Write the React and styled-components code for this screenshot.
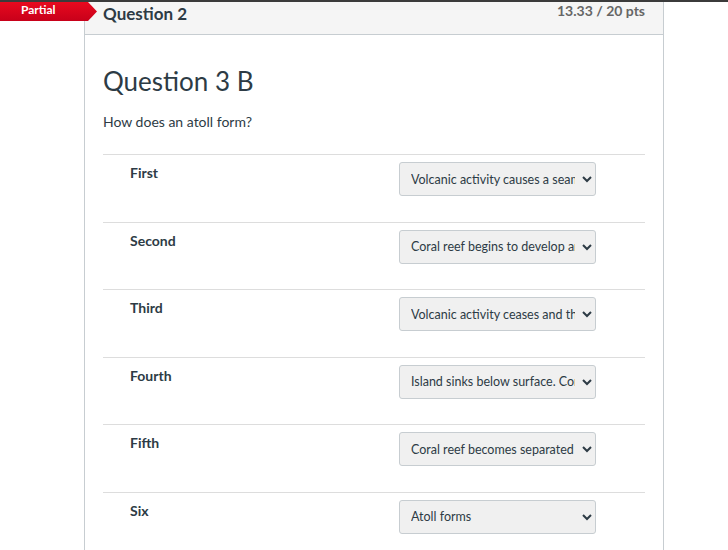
import React from "react";
import styled, { createGlobalStyle } from "styled-components";

const Global = createGlobalStyle`
  html, body { margin: 0; padding: 0; background: #fff; }
  body { font-family: Lato, "Open Sans", sans-serif; color: #2d3b45; }
  * { box-sizing: border-box; }
`;

const Page = styled.div`
  position: relative;
  width: 728px;
  height: 550px;
  overflow: hidden;
  border-top: 2px solid #3b3b3b;
  padding-left: 84px;
`;

const Badge = styled.div`
  position: absolute;
  left: 0;
  top: 0;
  width: 97px;
  height: 19px;
  background: linear-gradient(#e80a1e, #c8001a);
  clip-path: polygon(0 0, 88px 0, 97px 9.5px, 88px 19px, 0 19px);
  color: #fff;
  font-size: 12px;
  font-weight: 700;
  line-height: 15px;
  padding-left: 21px;
`;

const Card = styled.div`
  width: 580px;
  height: 560px;
  border-left: 1px solid #c7cdd1;
  border-right: 1px solid #c7cdd1;
`;

const Header = styled.div`
  display: flex;
  justify-content: space-between;
  align-items: flex-start;
  height: 33px;
  background: #f5f5f5;
  border-bottom: 1px solid #c7cdd1;
  padding: 0 18px 0 18px;
`;

const HeaderTitle = styled.div`
  font-size: 17px;
  font-weight: 700;
  color: #2d3b45;
  line-height: 22px;
  margin-top: 1px;
`;

const Points = styled.div`
  font-size: 14px;
  font-weight: 700;
  color: #666;
  line-height: 14px;
  margin-top: 2px;
`;

const Body = styled.div`
  padding: 30px 18px 0 18px;
`;

const Title = styled.h2`
  margin: 0;
  font-size: 26px;
  font-weight: 400;
  line-height: 32px;
  color: #2d3b45;
`;

const Prompt = styled.p`
  margin: 15px 0 22px;
  font-size: 14px;
  line-height: 20px;
  color: #2d3b45;
`;

const Row = styled.div`
  display: flex;
  justify-content: space-between;
  align-items: flex-start;
  height: 67.6px;
  border-top: 1px solid #dddddd;
  padding: 7px 49px 0 27px;
`;

const Label = styled.div`
  font-size: 14px;
  font-weight: 700;
  line-height: 18px;
  margin-top: 2px;
  color: #2d3b45;
`;

const Select = styled.select`
  width: 197px;
  height: 34px;
  font-family: Lato, "Open Sans", sans-serif;
  font-size: 12.5px;
  color: #2d3b45;
  background: #f0f0f0;
  border: 1px solid #c7cdd1;
  border-radius: 3px;
  padding: 0 4px 0 7px;
`;

const rows = [
  ["First", "Volcanic activity causes a seamount to form"],
  ["Second", "Coral reef begins to develop around the island"],
  ["Third", "Volcanic activity ceases and the island erodes"],
  ["Fourth", "Island sinks below surface. Coral continues to grow"],
  ["Fifth", "Coral reef becomes separated from the island"],
  ["Six", "Atoll forms"],
];

export default function App() {
  return (
    <>
      <Global />
      <Page>
        <Badge>Partial</Badge>
        <Card>
          <Header>
            <HeaderTitle>Question 2</HeaderTitle>
            <Points>13.33 / 20 pts</Points>
          </Header>
          <Body>
            <Title>Question 3 B</Title>
            <Prompt>How does an atoll form?</Prompt>
            {rows.map(([label, value]) => (
              <Row key={label}>
                <Label>{label}</Label>
                <Select defaultValue={value}>
                  <option value={value}>{value}</option>
                </Select>
              </Row>
            ))}
          </Body>
        </Card>
      </Page>
    </>
  );
}
